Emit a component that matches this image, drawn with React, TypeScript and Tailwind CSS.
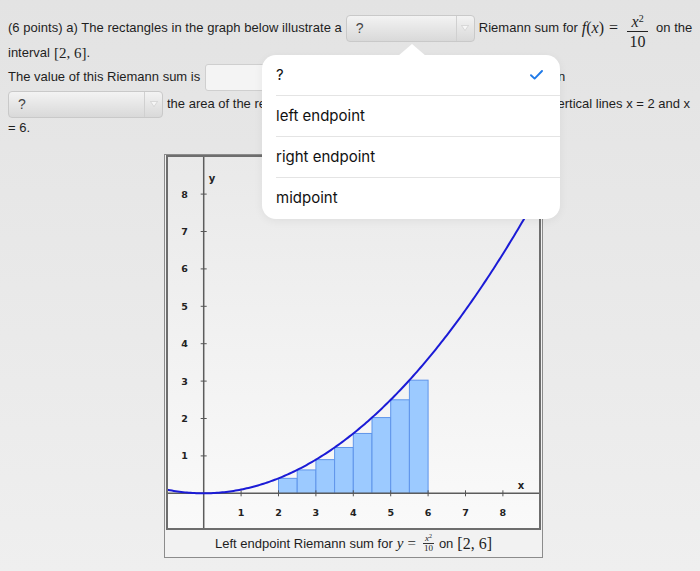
import React from "react";

const X0 = 37.7;
const Y0 = 338.3;
const U = 37.4;
const px = (x: number) => X0 + x * U;
const py = (y: number) => Y0 - y * U;
const f = (x: number) => (x * x) / 10;

function SelectBox({ width }: { width: number }) {
  return (
    <div
      className="relative flex h-[27px] items-center rounded-[4px] border border-[#c9c9c9] bg-gradient-to-b from-[#f3f3f3] to-[#d9d9d9]"
      style={{ width }}
    >
      <span className="pl-[9px] text-[14px] text-[#444]">?</span>
      <div className="absolute right-0 top-0 flex h-full w-[18px] items-center justify-center border-l border-[#d0d0d0]">
        <svg width="8" height="6" viewBox="0 0 8 6">
          <path d="M0.5 0.5 L7.5 0.5 L4 5.5 Z" fill="#f6f6f6" stroke="#c8c8c8" strokeWidth="0.6" />
        </svg>
      </div>
    </div>
  );
}

function Graph() {
  const pts: string[] = [];
  for (let x = -1.2; x <= 9.6; x += 0.05) {
    pts.push(`${px(x).toFixed(2)},${py(f(x)).toFixed(2)}`);
  }
  const rects = Array.from({ length: 8 }, (_, i) => 2 + 0.5 * i);
  const ticks = [1, 2, 3, 4, 5, 6, 7, 8];
  return (
    <svg width="375" height="375" viewBox="0 0 375 375" className="block">
      <defs>
        <linearGradient id="pbg" x1="0" y1="0" x2="0" y2="1">
          <stop offset="0" stopColor="#e9e9e9" />
          <stop offset="1" stopColor="#fafafa" />
        </linearGradient>
        <clipPath id="clip">
          <rect x="2" y="2" width="371" height="371" />
        </clipPath>
      </defs>
      <rect x="0" y="0" width="375" height="375" fill="url(#pbg)" />
      {rects.map((x) => (
        <rect
          key={x}
          x={px(x)}
          y={py(f(x))}
          width={0.5 * U}
          height={f(x) * U}
          fill="#9ccaff"
          stroke="#5f95ea"
          strokeWidth="1"
        />
      ))}
      <line x1={px(0)} y1="0" x2={px(0)} y2="375" stroke="#5c5c5c" strokeWidth="1.5" />
      <line x1="0" y1={py(0)} x2="375" y2={py(0)} stroke="#5c5c5c" strokeWidth="1.5" />
      {ticks.map((t) => (
        <g key={t}>
          <line x1={px(t)} y1={py(0) - 3} x2={px(t)} y2={py(0) + 3} stroke="#555" strokeWidth="1" />
          <line x1={px(0) - 3} y1={py(t)} x2={px(0) + 3} y2={py(t)} stroke="#555" strokeWidth="1" />
          <text
            x={px(t)}
            y={361}
            textAnchor="middle"
            fontFamily="'DejaVu Sans', sans-serif"
            fontWeight="bold"
            fontSize="9.5"
            fill="#222"
          >
            {t}
          </text>
          <text
            x={18.5}
            y={py(t) + 3.5}
            textAnchor="middle"
            fontFamily="'DejaVu Sans', sans-serif"
            fontWeight="bold"
            fontSize="9.5"
            fill="#222"
          >
            {t}
          </text>
        </g>
      ))}
      <text x={46} y={27} textAnchor="middle" fontFamily="'DejaVu Sans', sans-serif" fontWeight="bold" fontSize="10" fill="#222">
        y
      </text>
      <text x={355} y={334} textAnchor="middle" fontFamily="'DejaVu Sans', sans-serif" fontWeight="bold" fontSize="10" fill="#222">
        x
      </text>
      <g clipPath="url(#clip)">
        <polyline points={pts.join(" ")} fill="none" stroke="#1b1bd6" strokeWidth="2" />
      </g>
      <rect x="1" y="1" width="373" height="373" fill="none" stroke="#6e6e6e" strokeWidth="2" />
      <line x1="0" y1="1" x2="375" y2="1" stroke="#6e6e6e" strokeWidth="2" />
    </svg>
  );
}

function Check() {
  return (
    <svg width="13" height="10" viewBox="0 0 13 10">
      <path d="M1 5.2 L4.6 8.6 L12 1" fill="none" stroke="#1f7ae8" strokeWidth="1.9" strokeLinecap="round" strokeLinejoin="round" />
    </svg>
  );
}

export default function App() {
  const serif = "font-['Liberation_Serif',serif]";
  return (
    <div className="relative h-[571px] w-[700px] overflow-hidden bg-gradient-to-b from-[#e3e3e3] to-[#efefef] font-['Liberation_Sans',Arial,sans-serif] text-[13px] text-[#1e1e1e]">
      <div className="pl-[8px]">
        {/* Row 1 */}
        <div className="mt-[14px] flex h-[28px] items-center whitespace-nowrap">
          <span className="tracking-[0.04px]">(6 points) a) The rectangles in the graph below illustrate a</span>
          <div className="ml-[4px]">
            <SelectBox width={129} />
          </div>
          <span className="ml-[4px]">Riemann sum for</span>
          <span className={`${serif} ml-[4px] text-[16px]`}>
            <i>f</i>(<i>x</i>)<span className="mx-[5px]">=</span>
          </span>
          <span className={`${serif} mx-[4px] inline-flex flex-col items-center text-[16px] leading-[14px]`}>
            <span className="-mt-[5px] pb-[2px]">
              <i>x</i>
              <sup className="text-[10px]">2</sup>
            </span>
            <span className="h-px w-[21px] bg-[#222]" />
            <span className="-mb-[12px] pt-[3px]">10</span>
          </span>
          <span className="ml-[4px]">on the</span>
        </div>
        {/* Row 2 */}
        <div className="flex h-[22px] items-center">
          <span>interval</span>
          <span className={`${serif} ml-[4px] text-[15px]`}>[2, 6]</span>
          <span>.</span>
        </div>
        {/* Row 3 */}
        <div className="flex h-[26px] items-center whitespace-nowrap">
          <span>The value of this Riemann sum is</span>
          <div className="ml-[5px] h-[27px] w-[110px] rounded-[3px] border border-[#cfcfcf] bg-[#f4f4f4]" />
          <span className="w-[250px] overflow-hidden text-right">, and this Riemann sum is an</span>
        </div>
        {/* Row 4 */}
        <div className="mt-[1px] flex h-[26px] items-center whitespace-nowrap">
          <SelectBox width={155} />
          <span className="ml-[4px] w-[384px] overflow-hidden">the area of the region bounded by y = f(x), the x-axis, and the</span>
          <span>vertical lines x = 2 and x</span>
        </div>
        {/* Row 5 */}
        <div className="flex h-[21px] items-center">
          <span>= 6.</span>
        </div>
      </div>

      {/* Graph */}
      <div className="ml-[164px] mt-[16px] w-[379px] border border-[#8c8c8c] bg-[#f2f2f2] px-px">
        <Graph />
        <div className="flex h-[27px] items-center justify-center whitespace-nowrap text-[13px]">
          <span>Left endpoint Riemann sum for</span>
          <span className={`${serif} ml-[4px] text-[15px]`}>
            <i>y</i>
            <span className="mx-[4px]">=</span>
          </span>
          <span className={`${serif} mx-[3px] inline-flex flex-col items-center text-[9px] leading-[9px]`}>
            <span>
              <i>x</i>
              <sup className="text-[6px]">2</sup>
            </span>
            <span className="h-px w-[11px] bg-[#333]" />
            <span>10</span>
          </span>
          <span className="ml-[2px]">on</span>
          <span className={`${serif} ml-[4px] text-[16px]`}>[2, 6]</span>
        </div>
      </div>

      {/* Popover */}
      <div className="absolute left-[262px] top-[55px] h-[164px] w-[298px] rounded-[14px] bg-white font-['Inter',sans-serif] text-[15px] text-[#111] shadow-[0_2px_10px_rgba(0,0,0,0.06)]">
        <div className="absolute -top-[11px] left-[136px] h-0 w-0 border-x-[14px] border-b-[12px] border-x-transparent border-b-white" />
        <div className="ml-[14px] flex h-[41px] items-center justify-between border-b border-[#e4e4e4] pr-[17px]">
          <span>?</span>
          <Check />
        </div>
        <div className="ml-[14px] flex h-[41px] items-center border-b border-[#e4e4e4]">left endpoint</div>
        <div className="ml-[14px] flex h-[41px] items-center border-b border-[#e4e4e4]">right endpoint</div>
        <div className="ml-[14px] flex h-[41px] items-center">midpoint</div>
      </div>
    </div>
  );
}
